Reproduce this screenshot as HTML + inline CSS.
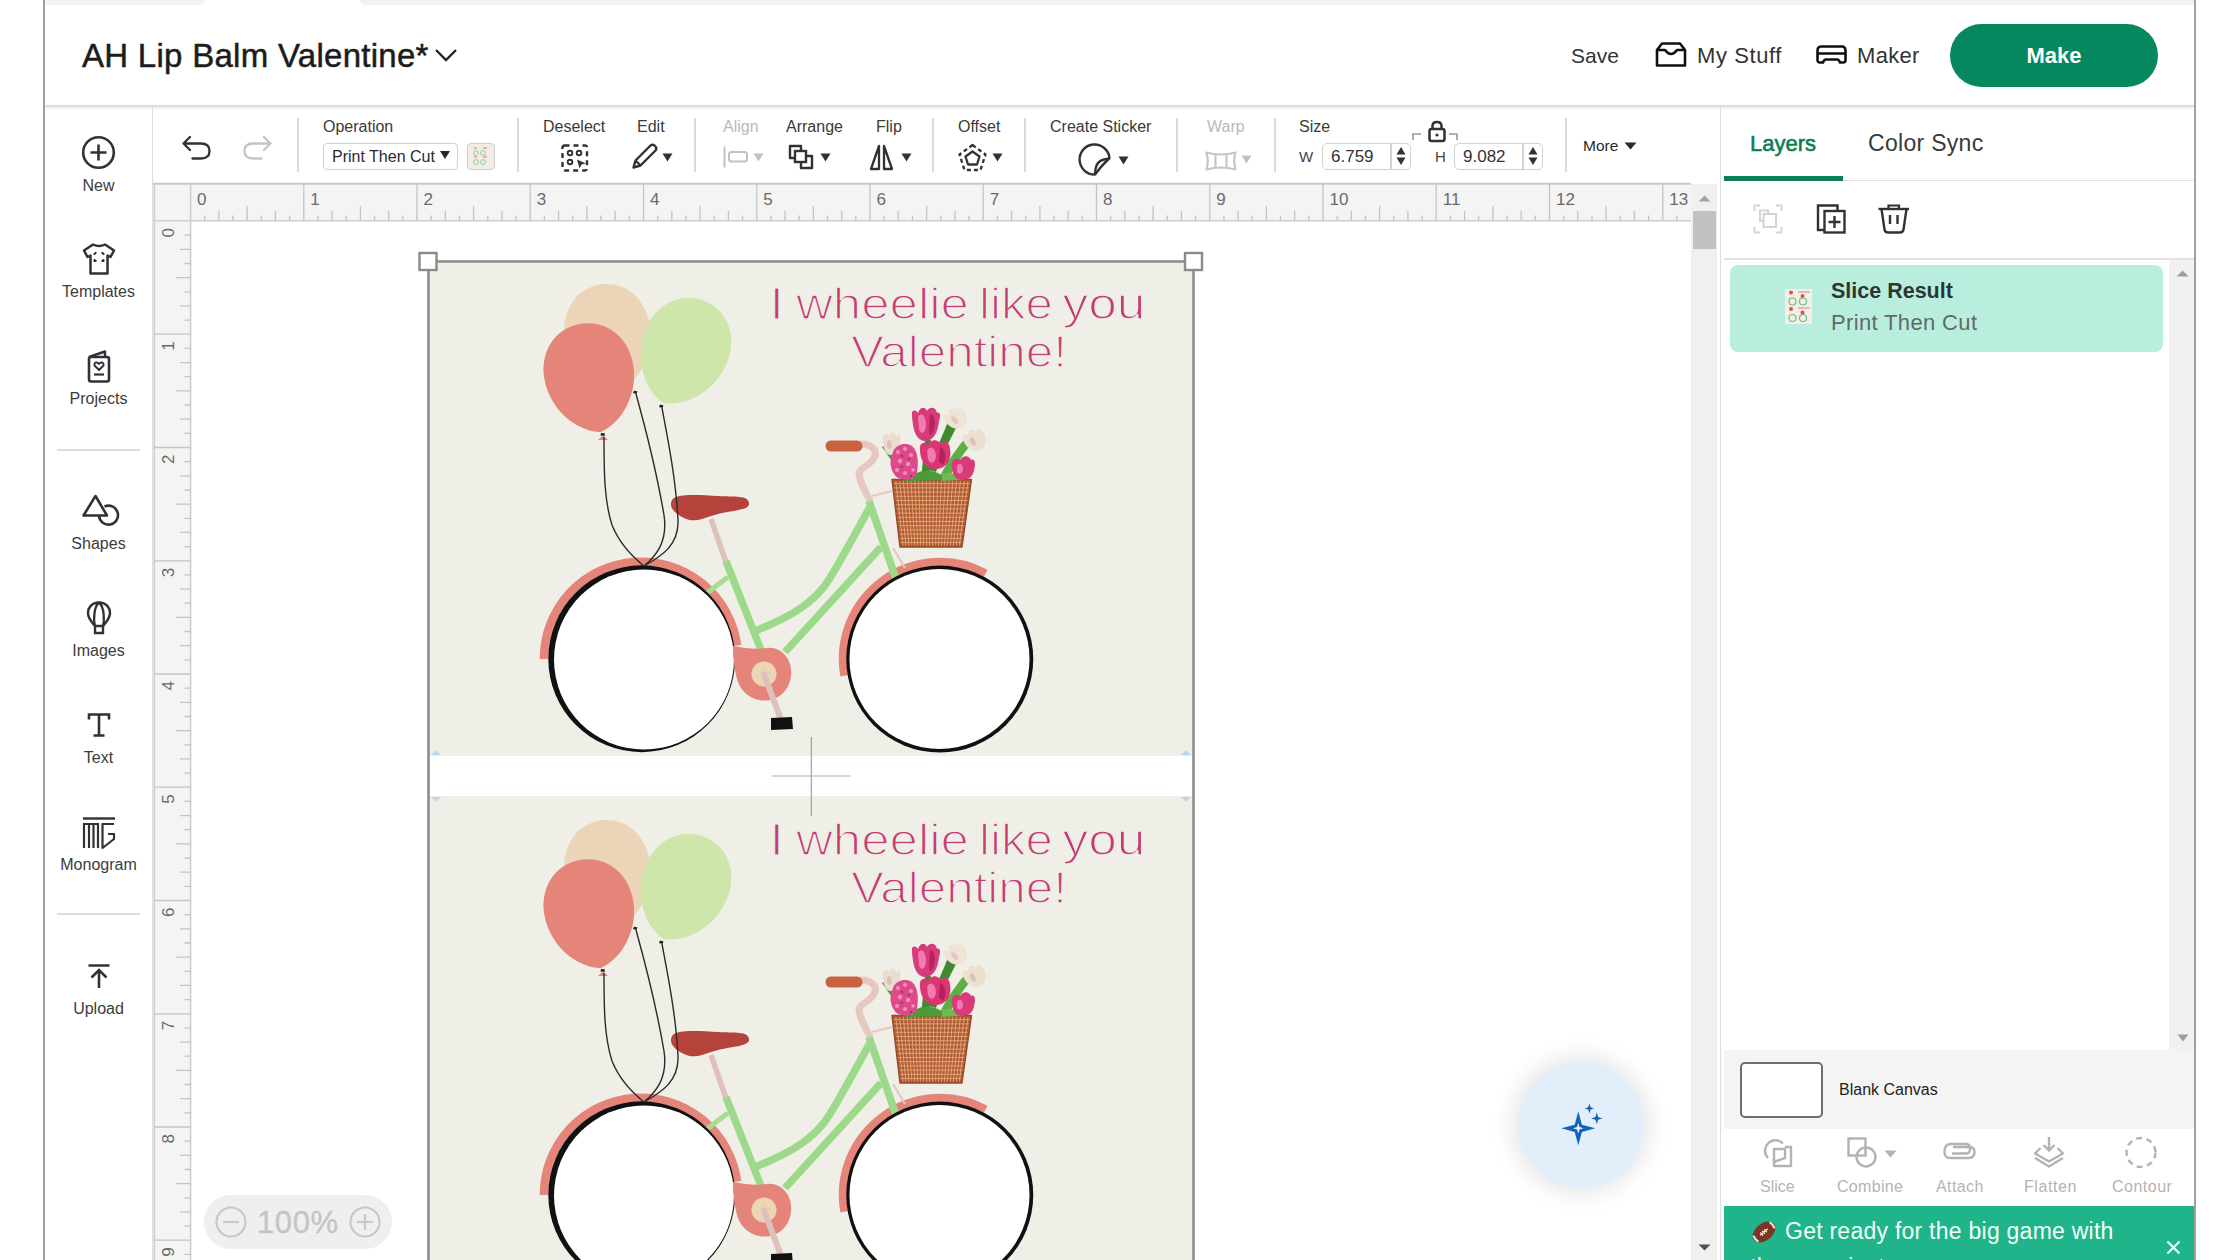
<!DOCTYPE html>
<html><head><meta charset="utf-8">
<style>
*{box-sizing:border-box;margin:0;padding:0}
html,body{width:2240px;height:1260px;overflow:hidden;background:#fff;font-family:"Liberation Sans",sans-serif;color:#2b2b2b}
.a{position:absolute}
.t{position:absolute;white-space:nowrap;line-height:1}
svg{position:absolute;overflow:visible}
.lbl{position:absolute;white-space:nowrap;line-height:1;font-size:16px;color:#3c3c3c;text-align:center}
.tl{position:absolute;white-space:nowrap;line-height:1;font-size:16px;color:#3a3a3a}
.dis{color:#b9b9b9}
.sep{position:absolute;width:2px;background:#dadada;top:118px;height:54px}
</style></head><body>

<!-- frame -->
<div class="a" style="left:43px;top:0;width:2px;height:1260px;background:#a0a0a0"></div>
<div class="a" style="left:2194px;top:0;width:2px;height:1260px;background:#a0a0a0"></div>
<div class="a" style="left:45px;top:0;width:160px;height:5px;background:#f1f1f1;border-radius:0 0 6px 0"></div>
<div class="a" style="left:360px;top:0;width:1834px;height:5px;background:#f1f1f1;border-radius:0 0 0 6px"></div>
<div class="t" style="left:82px;top:39px;font-size:33px;letter-spacing:0.28px;color:#1c1c1c;-webkit-text-stroke:0.5px #1c1c1c">AH Lip Balm Valentine*</div>
<svg style="left:433px;top:47px" width="26" height="16" viewBox="0 0 26 16"><path d="M3 3 L13 13 L23 3" fill="none" stroke="#222" stroke-width="2.4"/></svg>
<div class="t" style="left:1571px;top:45px;font-size:21px;color:#333">Save</div>
<svg style="left:1655px;top:42px" width="32" height="25" viewBox="0 0 32 25"><path d="M2 8 L7 1.5 H25 L30 8 V23.5 H2 Z M2 8 H10 Q16 16 22 8 H30" fill="none" stroke="#111" stroke-width="2.6" stroke-linejoin="round"/></svg>
<div class="t" style="left:1697px;top:45px;font-size:22px;letter-spacing:0.6px;color:#333">My Stuff</div>
<svg style="left:1816px;top:45px" width="31" height="19" viewBox="0 0 31 19"><path d="M5 1.5 H26 Q29.5 1.5 29.5 6 V15 Q29.5 17.5 27 17.5 H24 Q23 14.5 21 14.5 H10 Q8 14.5 7 17.5 H4 Q1.5 17.5 1.5 15 V6 Q1.5 1.5 5 1.5 Z M1.5 8.5 H29.5" fill="none" stroke="#111" stroke-width="2.6" stroke-linejoin="round"/></svg>
<div class="t" style="left:1857px;top:45px;font-size:22px;letter-spacing:0.3px;color:#333">Maker</div>
<div class="a" style="left:1950px;top:24px;width:208px;height:63px;border-radius:32px;background:#05875f"></div>
<div class="t" style="left:1950px;top:45px;width:208px;text-align:center;font-size:22px;font-weight:bold;color:#fff">Make</div>
<div class="a" style="left:45px;top:105px;width:2149px;height:2px;background:#dcdcdc;box-shadow:0 1px 3px rgba(0,0,0,0.12)"></div>

<div class="a" style="left:152px;top:107px;width:1px;height:1153px;background:#dedede"></div>
<svg style="left:80px;top:134px" width="37" height="37" viewBox="0 0 37 37"><circle cx="18.5" cy="18.5" r="15.3" fill="none" stroke="#2f3236" stroke-width="2.6"/><path d="M18.5 10.5V26.5M10.5 18.5H26.5" stroke="#2f3236" stroke-width="2.6"/></svg>
<div class="lbl" style="left:45px;width:107px;top:177.5px">New</div>
<svg style="left:82px;top:242px" width="34" height="34" viewBox="0 0 34 34"><path d="M11 2.5 Q17 5.5 23 2.5 L32 8.5 L28.5 15 L25.5 13.5 V31.5 H8.5 V13.5 L5.5 15 L2 8.5 Z" fill="none" stroke="#2f3236" stroke-width="2.5" stroke-linejoin="round"/><path d="M12.5 11h2M19.5 11h2M12.5 11v2M21.5 11v2M12.5 17v2h2M21.5 17v2h-2" stroke="#2f3236" stroke-width="1.8" fill="none"/></svg>
<div class="lbl" style="left:45px;width:107px;top:284px">Templates</div>
<svg style="left:86px;top:349px" width="26" height="35" viewBox="0 0 26 35"><path d="M3 8 L19 2.5 V8" fill="none" stroke="#2f3236" stroke-width="2.4" stroke-linejoin="round"/><rect x="3" y="8" width="20" height="24.5" rx="2" fill="none" stroke="#2f3236" stroke-width="2.6"/><path d="M13 21 L8.5 16.5 Q8 13.5 10.5 13.5 Q12 13.5 13 15 Q14 13.5 15.5 13.5 Q18 13.5 17.5 16.5 Z" fill="none" stroke="#2f3236" stroke-width="1.9" stroke-linejoin="round"/><path d="M8 25.5H18" stroke="#2f3236" stroke-width="2.2"/></svg>
<div class="lbl" style="left:45px;width:107px;top:391px">Projects</div>
<div class="a" style="left:57px;top:449px;width:83px;height:2px;background:#dcdcdc"></div>
<svg style="left:80px;top:492px" width="38" height="38" viewBox="0 0 38 38"><path d="M15.5 4 L3.5 23.5 H27 Z" fill="none" stroke="#2f3236" stroke-width="2.6" stroke-linejoin="round"/><path d="M19 23.5 A9.5 9.5 0 1 0 24.5 14.5" fill="none" stroke="#2f3236" stroke-width="2.6"/></svg>
<div class="lbl" style="left:45px;width:107px;top:536px">Shapes</div>
<svg style="left:86px;top:600px" width="26" height="36" viewBox="0 0 26 36"><path d="M13 2.5 C5.5 2.5 2 8 2 13 C2 18.5 6 22.5 9 26 H17 C20 22.5 24 18.5 24 13 C24 8 20.5 2.5 13 2.5 Z" fill="none" stroke="#2f3236" stroke-width="2.5" stroke-linejoin="round"/><path d="M13 2.5 C7.5 7 7.5 21 9 26 M13 2.5 C18.5 7 18.5 21 17 26" fill="none" stroke="#2f3236" stroke-width="2.3"/><path d="M9 26 V33 H17 V26" fill="none" stroke="#2f3236" stroke-width="2.4"/></svg>
<div class="lbl" style="left:45px;width:107px;top:643px">Images</div>
<svg style="left:86px;top:711px" width="26" height="28" viewBox="0 0 26 28"><path d="M3 8.5 V3.5 H23 V8.5 M13 3.5 V24.5 M7.5 24.5 H18.5" fill="none" stroke="#2f3236" stroke-width="2.6"/></svg>
<div class="lbl" style="left:45px;width:107px;top:750px">Text</div>
<svg style="left:81px;top:815px" width="36" height="36" viewBox="0 0 36 36"><path d="M2 3.5 H34" stroke="#2f3236" stroke-width="2.4"/><path d="M3 33 V9 H17 V33 M8 9 V33 M12.5 9 V33" fill="none" stroke="#2f3236" stroke-width="2.2"/><path d="M33 9 H21.5 V33 L33 24 V19 H27" fill="none" stroke="#2f3236" stroke-width="2.2" stroke-linejoin="round"/></svg>
<div class="lbl" style="left:45px;width:107px;top:857px">Monogram</div>
<div class="a" style="left:57px;top:913px;width:83px;height:2px;background:#dcdcdc"></div>
<svg style="left:86px;top:962px" width="26" height="28" viewBox="0 0 26 28"><path d="M2.5 3.5 H23.5 M13 26 V8.5 M5.5 15.5 L13 8 L20.5 15.5" fill="none" stroke="#2f3236" stroke-width="2.6"/></svg>
<div class="lbl" style="left:45px;width:107px;top:1001px">Upload</div>

<svg style="left:180px;top:134px" width="34" height="28" viewBox="0 0 34 28"><path d="M10 3 L3.5 9.5 L10 16 M3.5 9.5 H21 Q29.5 9.5 29.5 17 Q29.5 24.5 21 24.5 H12.5" fill="none" stroke="#2f3236" stroke-width="2.3" stroke-linecap="round" stroke-linejoin="round"/></svg>
<svg style="left:240px;top:134px" width="34" height="28" viewBox="0 0 34 28"><path d="M24 3 L30.5 9.5 L24 16 M30.5 9.5 H13 Q4.5 9.5 4.5 17 Q4.5 24.5 13 24.5 H21.5" fill="none" stroke="#c4c4c4" stroke-width="2.3" stroke-linecap="round" stroke-linejoin="round"/></svg>
<div class="sep" style="left:297px"></div>
<div class="tl" style="left:323px;top:119px">Operation</div>
<div class="a" style="left:323px;top:143px;width:135px;height:27px;border:1.5px solid #cfcfcf;border-radius:4px"></div>
<div class="tl" style="left:332px;top:149px;color:#2a2a2a">Print Then Cut</div>
<svg style="left:439px;top:150px" width="12" height="10" viewBox="0 0 12 10"><path d="M1 1H11L6 9Z" fill="#2a2a2a"/></svg>
<div class="a" style="left:467px;top:143px;width:28px;height:27px;border:1.5px solid #cfcfcf;border-radius:4px;background:#f1ede5"></div>
<svg style="left:471px;top:146px" width="20" height="21" viewBox="0 0 20 21"><g fill="none" stroke-width="1"><circle cx="5" cy="7" r="2.4" stroke="#8fcf9f"/><circle cx="12" cy="7" r="2.4" stroke="#8fcf9f"/><circle cx="5" cy="16" r="2.4" stroke="#8fcf9f"/><circle cx="12" cy="16" r="2.4" stroke="#8fcf9f"/></g><path d="M3 2h3M12 2h4M3 11h3M12 11h4" stroke="#d77" stroke-width="1.2"/></svg>
<div class="sep" style="left:517px"></div>
<div class="tl" style="left:543px;top:119px">Deselect</div>
<svg style="left:560px;top:143px" width="30" height="30" viewBox="0 0 30 30"><rect x="2.5" y="2.5" width="24.5" height="25" rx="2" fill="none" stroke="#2f3236" stroke-width="2.4" stroke-dasharray="5 4"/><circle cx="10" cy="10" r="2.3" fill="none" stroke="#2f3236" stroke-width="1.9"/><circle cx="19" cy="10" r="2.3" fill="none" stroke="#2f3236" stroke-width="1.9"/><circle cx="10" cy="19" r="2.3" fill="none" stroke="#2f3236" stroke-width="1.9"/><path d="M17 16.5 L26 20.5 L21.5 21.5 L19.5 25.5 Z" fill="#2f3236"/></svg>
<div class="tl" style="left:637px;top:119px">Edit</div>
<svg style="left:630px;top:142px" width="30" height="30" viewBox="0 0 30 30"><path d="M3.5 25.5 L5.5 18.5 L20.5 3.5 Q22.5 1.8 24.5 3.5 L25.5 4.5 Q27.2 6.5 25.5 8.5 L10.5 23.5 Z M5.5 18.5 L10.5 23.5" fill="none" stroke="#2f3236" stroke-width="2.4" stroke-linejoin="round"/></svg>
<svg style="left:662px;top:153px" width="11" height="9" viewBox="0 0 11 9"><path d="M0.5 0.5H10.5L5.5 8.5Z" fill="#2f3236"/></svg>
<div class="sep" style="left:694px"></div>
<div class="tl dis" style="left:723px;top:119px">Align</div>
<svg style="left:722px;top:145px" width="28" height="24" viewBox="0 0 28 24"><path d="M2.5 1.5V22.5" stroke="#c2c2c2" stroke-width="2"/><rect x="7" y="7" width="18" height="9.5" rx="2.5" fill="none" stroke="#c2c2c2" stroke-width="2"/></svg>
<svg style="left:753px;top:153px" width="11" height="9" viewBox="0 0 11 9"><path d="M0.5 0.5H10.5L5.5 8.5Z" fill="#c2c2c2"/></svg>
<div class="tl" style="left:786px;top:119px">Arrange</div>
<svg style="left:787px;top:143px" width="30" height="28" viewBox="0 0 30 28"><path d="M14 8 V3 H3 V15 H8" fill="none" stroke="#2f3236" stroke-width="2.4" stroke-linejoin="round"/><rect x="8" y="8" width="11" height="11" fill="none" stroke="#2f3236" stroke-width="2.4"/><path d="M19 13 H25 V25 H14 V19" fill="none" stroke="#2f3236" stroke-width="2.4" stroke-linejoin="round"/></svg>
<svg style="left:820px;top:153px" width="11" height="9" viewBox="0 0 11 9"><path d="M0.5 0.5H10.5L5.5 8.5Z" fill="#2f3236"/></svg>
<div class="tl" style="left:876px;top:119px">Flip</div>
<svg style="left:868px;top:143px" width="28" height="28" viewBox="0 0 28 28"><path d="M11 3 L3 26 H11 Z M16 3 L24 26 H16 Z" fill="none" stroke="#2f3236" stroke-width="2.3" stroke-linejoin="round"/></svg>
<svg style="left:901px;top:153px" width="11" height="9" viewBox="0 0 11 9"><path d="M0.5 0.5H10.5L5.5 8.5Z" fill="#2f3236"/></svg>
<div class="sep" style="left:932px"></div>
<div class="tl" style="left:958px;top:119px">Offset</div>
<svg style="left:958px;top:143px" width="30" height="30" viewBox="0 0 30 30"><path d="M14.5 2 L27.5 11.5 L22.5 27 H6.5 L1.5 11.5 Z" fill="none" stroke="#2f3236" stroke-width="2.3" stroke-dasharray="4 3" stroke-linejoin="round"/><path d="M14.5 8.5 L21.5 13.5 L19 21.5 H10 L7.5 13.5 Z" fill="none" stroke="#2f3236" stroke-width="2.3" stroke-linejoin="round"/></svg>
<svg style="left:992px;top:153px" width="11" height="9" viewBox="0 0 11 9"><path d="M0.5 0.5H10.5L5.5 8.5Z" fill="#2f3236"/></svg>
<div class="sep" style="left:1024px"></div>
<div class="tl" style="left:1050px;top:119px">Create Sticker</div>
<svg style="left:1078px;top:143px" width="36" height="35" viewBox="0 0 36 35"><path d="M17 31.5 A15 15 0 1 1 31.5 15 Q30 16 26 16.5 Q19 18 17.5 26 Z" fill="none" stroke="#2f3236" stroke-width="2.4" stroke-linejoin="round"/><path d="M31.5 15 Q24 22 17 31.5" fill="none" stroke="#2f3236" stroke-width="2.4"/></svg>
<svg style="left:1118px;top:156px" width="11" height="9" viewBox="0 0 11 9"><path d="M0.5 0.5H10.5L5.5 8.5Z" fill="#2f3236"/></svg>
<div class="sep" style="left:1176px"></div>
<div class="tl dis" style="left:1207px;top:119px">Warp</div>
<svg style="left:1204px;top:150px" width="34" height="22" viewBox="0 0 34 22"><path d="M2.5 2.5 Q17 6.5 31.5 2.5 Q29 11 31.5 19.5 Q17 15.5 2.5 19.5 Q5 11 2.5 2.5 Z M11.5 5 V17 M22.5 5 V17" fill="none" stroke="#c6c6c6" stroke-width="2.2" stroke-linejoin="round"/></svg>
<svg style="left:1241px;top:155px" width="11" height="9" viewBox="0 0 11 9"><path d="M0.5 0.5H10.5L5.5 8.5Z" fill="#c2c2c2"/></svg>
<div class="sep" style="left:1274px"></div>
<div class="tl" style="left:1299px;top:119px">Size</div>
<div class="tl" style="left:1299px;top:149px;font-size:15px;color:#444">W</div>
<div class="a" style="left:1322px;top:143px;width:89px;height:27px;border:1.5px solid #d2d2d2;border-radius:5px"></div>
<div class="a" style="left:1390px;top:144px;width:1.5px;height:25px;background:#d2d2d2"></div>
<div class="tl" style="left:1331px;top:148px;font-size:17px;color:#333">6.759</div>
<svg style="left:1395px;top:146px" width="12" height="20" viewBox="0 0 12 20"><path d="M1.5 8.5H10.5L6 1Z M1.5 11.5H10.5L6 19Z" fill="#2f3236"/></svg>
<svg style="left:1411px;top:119px" width="48" height="24" viewBox="0 0 48 24"><path d="M2 21 V15 H10 M38 15 H46 V21" fill="none" stroke="#9a9a9a" stroke-width="1.6"/><rect x="18.5" y="10" width="15" height="12" rx="2" fill="none" stroke="#2f3236" stroke-width="2.5"/><path d="M21.5 10 V7 Q21.5 3 26 3 Q30.5 3 30.5 7 V10" fill="none" stroke="#2f3236" stroke-width="2.5"/><circle cx="26" cy="16" r="1.6" fill="#2f3236"/></svg>
<div class="tl" style="left:1435px;top:149px;font-size:15px;color:#444">H</div>
<div class="a" style="left:1454px;top:143px;width:89px;height:27px;border:1.5px solid #d2d2d2;border-radius:5px"></div>
<div class="a" style="left:1522px;top:144px;width:1.5px;height:25px;background:#d2d2d2"></div>
<div class="tl" style="left:1463px;top:148px;font-size:17px;color:#333">9.082</div>
<svg style="left:1527px;top:146px" width="12" height="20" viewBox="0 0 12 20"><path d="M1.5 8.5H10.5L6 1Z M1.5 11.5H10.5L6 19Z" fill="#2f3236"/></svg>
<div class="sep" style="left:1565px"></div>
<div class="tl" style="left:1583px;top:138px;font-size:15.5px;color:#2a2a2a">More</div>
<svg style="left:1624px;top:142px" width="13" height="8" viewBox="0 0 13 8"><path d="M0.5 0.5H12.5L6.5 7.5Z" fill="#2a2a2a"/></svg>

<div class="a" style="left:153px;top:183px;width:1538px;height:38px;background:#f4f4f4"></div>
<div class="a" style="left:153px;top:221px;width:38px;height:1039px;background:#f4f4f4"></div>
<svg style="left:0;top:0" width="2240" height="1260" viewBox="0 0 2240 1260">
<g stroke="#c4c4c4" stroke-width="1.3" fill="none">
<path d="M153 183.8H1691" stroke="#c8c8c8" stroke-width="2"/>
<path d="M153 220.7H1691" stroke="#cfcfcf" stroke-width="1.6"/>
<path d="M190.6 184V1260" stroke="#cfcfcf" stroke-width="1.6"/>
<path d="M154.4 184V1260" stroke="#cfcfcf" stroke-width="1.6"/>
<path d="M204.7 215.5V221M218.8 211V221M233.0 215.5V221M247.1 206V221M261.3 215.5V221M275.4 211V221M289.6 215.5V221M303.8 184V221M317.9 215.5V221M332.1 211V221M346.2 215.5V221M360.4 206V221M374.5 215.5V221M388.7 211V221M402.8 215.5V221M417.0 184V221M431.2 215.5V221M445.3 211V221M459.5 215.5V221M473.6 206V221M487.8 215.5V221M501.9 211V221M516.1 215.5V221M530.2 184V221M544.4 215.5V221M558.6 211V221M572.7 215.5V221M586.9 206V221M601.0 215.5V221M615.2 211V221M629.3 215.5V221M643.5 184V221M657.7 215.5V221M671.8 211V221M686.0 215.5V221M700.1 206V221M714.3 215.5V221M728.4 211V221M742.6 215.5V221M756.8 184V221M770.9 215.5V221M785.1 211V221M799.2 215.5V221M813.4 206V221M827.5 215.5V221M841.7 211V221M855.8 215.5V221M870.0 184V221M884.2 215.5V221M898.3 211V221M912.5 215.5V221M926.6 206V221M940.8 215.5V221M954.9 211V221M969.1 215.5V221M983.2 184V221M997.4 215.5V221M1011.6 211V221M1025.7 215.5V221M1039.9 206V221M1054.0 215.5V221M1068.2 211V221M1082.3 215.5V221M1096.5 184V221M1110.7 215.5V221M1124.8 211V221M1139.0 215.5V221M1153.1 206V221M1167.3 215.5V221M1181.4 211V221M1195.6 215.5V221M1209.8 184V221M1223.9 215.5V221M1238.1 211V221M1252.2 215.5V221M1266.4 206V221M1280.5 215.5V221M1294.7 211V221M1308.8 215.5V221M1323.0 184V221M1337.2 215.5V221M1351.3 211V221M1365.5 215.5V221M1379.6 206V221M1393.8 215.5V221M1407.9 211V221M1422.1 215.5V221M1436.2 184V221M1450.4 215.5V221M1464.6 211V221M1478.7 215.5V221M1492.9 206V221M1507.0 215.5V221M1521.2 211V221M1535.3 215.5V221M1549.5 184V221M1563.7 215.5V221M1577.8 211V221M1592.0 215.5V221M1606.1 206V221M1620.3 215.5V221M1634.4 211V221M1648.6 215.5V221M1662.8 184V221M1676.9 215.5V221M184.5 235.2H190.6M180 249.3H190.6M184.5 263.5H190.6M176 277.6H190.6M184.5 291.8H190.6M180 305.9H190.6M184.5 320.1H190.6M154 334.2H190.6M184.5 348.4H190.6M180 362.6H190.6M184.5 376.7H190.6M176 390.9H190.6M184.5 405.0H190.6M180 419.2H190.6M184.5 433.3H190.6M154 447.5H190.6M184.5 461.7H190.6M180 475.8H190.6M184.5 490.0H190.6M176 504.1H190.6M184.5 518.3H190.6M180 532.4H190.6M184.5 546.6H190.6M154 560.8H190.6M184.5 574.9H190.6M180 589.1H190.6M184.5 603.2H190.6M176 617.4H190.6M184.5 631.5H190.6M180 645.7H190.6M184.5 659.8H190.6M154 674.0H190.6M184.5 688.2H190.6M180 702.3H190.6M184.5 716.5H190.6M176 730.6H190.6M184.5 744.8H190.6M180 758.9H190.6M184.5 773.1H190.6M154 787.2H190.6M184.5 801.4H190.6M180 815.6H190.6M184.5 829.7H190.6M176 843.9H190.6M184.5 858.0H190.6M180 872.2H190.6M184.5 886.3H190.6M154 900.5H190.6M184.5 914.7H190.6M180 928.8H190.6M184.5 943.0H190.6M176 957.1H190.6M184.5 971.3H190.6M180 985.4H190.6M184.5 999.6H190.6M154 1013.8H190.6M184.5 1027.9H190.6M180 1042.1H190.6M184.5 1056.2H190.6M176 1070.4H190.6M184.5 1084.5H190.6M180 1098.7H190.6M184.5 1112.8H190.6M154 1127.0H190.6M184.5 1141.2H190.6M180 1155.3H190.6M184.5 1169.5H190.6M176 1183.6H190.6M184.5 1197.8H190.6M180 1211.9H190.6M184.5 1226.1H190.6M154 1240.2H190.6M184.5 1254.4H190.6"/>
</g>
<g fill="#6a6a6a" font-family="Liberation Sans" font-size="17">
<text x="197.0" y="205">0</text>
<text x="310.2" y="205">1</text>
<text x="423.5" y="205">2</text>
<text x="536.8" y="205">3</text>
<text x="650.0" y="205">4</text>
<text x="763.2" y="205">5</text>
<text x="876.5" y="205">6</text>
<text x="989.8" y="205">7</text>
<text x="1103.0" y="205">8</text>
<text x="1216.2" y="205">9</text>
<text x="1329.5" y="205">10</text>
<text x="1442.8" y="205">11</text>
<text x="1556.0" y="205">12</text>
<text x="1669.2" y="205">13</text>
<text transform="translate(173.5 228.0) rotate(-90)" text-anchor="end">0</text>
<text transform="translate(173.5 341.2) rotate(-90)" text-anchor="end">1</text>
<text transform="translate(173.5 454.5) rotate(-90)" text-anchor="end">2</text>
<text transform="translate(173.5 567.8) rotate(-90)" text-anchor="end">3</text>
<text transform="translate(173.5 681.0) rotate(-90)" text-anchor="end">4</text>
<text transform="translate(173.5 794.2) rotate(-90)" text-anchor="end">5</text>
<text transform="translate(173.5 907.5) rotate(-90)" text-anchor="end">6</text>
<text transform="translate(173.5 1020.8) rotate(-90)" text-anchor="end">7</text>
<text transform="translate(173.5 1134.0) rotate(-90)" text-anchor="end">8</text>
<text transform="translate(173.5 1247.2) rotate(-90)" text-anchor="end">9</text>
</g></svg>
<div class="a" style="left:1691px;top:184px;width:26px;height:1076px;background:#f0f0f0"></div>
<div class="a" style="left:1693px;top:211px;width:23px;height:38px;background:#c1c1c1"></div>
<svg style="left:1698px;top:195px" width="13" height="7" viewBox="0 0 13 7"><path d="M0.5 6.5H12.5L6.5 0.5Z" fill="#a3a3a3"/></svg>
<svg style="left:1698px;top:1244px" width="13" height="7" viewBox="0 0 13 7"><path d="M0.5 0.5H12.5L6.5 6.5Z" fill="#505050"/></svg>
<svg style="left:0;top:0" width="2240" height="1260" viewBox="0 0 2240 1260">
<defs><g id="art"><path transform="translate(608 339) rotate(-6)" d="M0 -55.0 C24.9 -55.0 43.0 -34.1 43.0 -6.6 C43.0 24.8 21.5 50.6 0 55.0 C-21.5 50.6 -43.0 24.8 -43.0 -6.6 C-43.0 -34.1 -24.9 -55.0 0 -55.0Z" fill="#ebd4b7"/>
<path transform="translate(684 352) rotate(22)" d="M0 -55.0 C25.5 -55.0 44.0 -34.1 44.0 -6.6 C44.0 24.8 22.0 50.6 0 55.0 C-22.0 50.6 -44.0 24.8 -44.0 -6.6 C-44.0 -34.1 -25.5 -55.0 0 -55.0Z" fill="#cfe6ab"/>
<path transform="translate(590 378) rotate(-11)" d="M0 -55.0 C26.1 -55.0 45.0 -34.1 45.0 -6.6 C45.0 24.8 22.5 50.6 0 55.0 C-22.5 50.6 -45.0 24.8 -45.0 -6.6 C-45.0 -34.1 -26.1 -55.0 0 -55.0Z" fill="#e5857a"/>
<path d="M634 390.5l3.5 1-1 2.5-3.5-1z M660 404.5l3.5 1-1 2.5-3.5-1z M601 433l4 0.5-0.5 2.5-4-0.5z" fill="#222"/>
<path d="M598 440 L603 435.5 L608 440 Z" fill="#e58a80"/>
<path d="M544.0 659.0 A97 97 0 0 1 737.1 645.5" fill="none" stroke="#e5857a" stroke-width="8.5"/>
<path d="M844.5 675.8 A97 97 0 0 1 985.5 573.4" fill="none" stroke="#e5857a" stroke-width="8.5"/>
<path d="M711 519 L726 562" stroke="#dfc1bb" stroke-width="5.5"/>
<path d="M672 500 C676 493 700 495 718 496 C735 497 748 495 749 503 C750 510 735 510 718 514 C705 517 695 524 684 518 C676 514 668 508 672 500Z" fill="#b5433c"/>
<g fill="none" stroke="#9dd98a" stroke-width="7.5" stroke-linecap="butt" stroke-linejoin="round"><path d="M726 561 L761 650"/><path d="M755 631 C790 617 815 603 830 578 C845 553 860 525 871 505"/><path d="M785 652 L881 547"/><path d="M869 501 L897 582"/></g>
<path d="M707 593 L728 577" stroke="#a7dc93" stroke-width="5"/>
<path d="M860 444 C872 444 878 450 874 458 C870 466 858 468 859 475 C861 485 866 492 870 501" fill="none" stroke="#e6c8c1" stroke-width="7" stroke-linejoin="round"/>
<rect x="825.5" y="440.5" width="37" height="11" rx="5.5" fill="#c9623e"/>
<path d="M872 496 L892 491 M893 548 L905 568" stroke="#e6c8c1" stroke-width="2.2"/>
<circle cx="641.7" cy="658.75" r="93.4" fill="#111"/>
<circle cx="644" cy="659.5" r="90" fill="#fff"/>
<circle cx="939.75" cy="659.1" r="93.5" fill="#111"/>
<circle cx="939.5" cy="658.9" r="90" fill="#fff"/>
<path d="M733 646 C745 648 756 650 766 648 C782 646 793 660 791 676 C789 694 773 703 759 700 C748 698 741 690 738 682 C734 670 733 656 733 646Z" fill="#e5857a"/>
<circle cx="764" cy="674" r="12.5" fill="#ecd5b4"/>
<path d="M764 674 L781 720" stroke="#dfc1bb" stroke-width="6" stroke-linecap="round"/>
<path d="M771 718 L792 717 L793 729 L771 730Z" fill="#111"/>
<g fill="none" stroke="#2a2a2a" stroke-width="1.4"><path d="M604 437 C604 470 604 500 612 525 C620 545 634 558 644 566"/><path d="M636 394 C646 430 658 480 664 515 C668 542 656 556 644 566"/><path d="M662 408 C668 440 676 480 678 520 C679 545 662 556 644 566"/></g>
<g>
<path d="M892 479.5 L971.5 479.5 L962 547 L900 547 Z" fill="#ab5a34" stroke="#9a4a26" stroke-width="1.4" stroke-linejoin="round"/>
<path d="M895.8 481L903.0 545.5M899.6 481L905.9 545.5M903.4 481L908.9 545.5M907.2 481L911.9 545.5M911.0 481L914.8 545.5M914.8 481L917.8 545.5M918.6 481L920.7 545.5M922.4 481L923.7 545.5M926.2 481L926.7 545.5M930.0 481L929.6 545.5M933.8 481L932.6 545.5M937.6 481L935.6 545.5M941.4 481L938.5 545.5M945.2 481L941.5 545.5M949.0 481L944.5 545.5M952.8 481L947.4 545.5M956.6 481L950.4 545.5M960.4 481L953.3 545.5M964.2 481L956.3 545.5M968.0 481L959.3 545.5M893.7 483.7H969.7M894.2 487.9H969.1M894.7 492.1H968.5M895.2 496.3H967.9M895.7 500.5H967.3M896.2 504.7H966.8M896.7 508.9H966.2M897.2 513.1H965.6M897.7 517.3H965.0M898.2 521.5H964.4M898.7 525.7H963.8M899.2 529.9H963.2M899.7 534.1H962.6M900.2 538.3H962.0M900.7 542.5H961.4" stroke="#eeac7a" stroke-width="0.9" opacity="0.95"/>
</g>
<g>
<path d="M882 447 C890 458 898 470 905 481 L914 481 C906 468 896 455 888 444Z" fill="#4a9636"/>
<path d="M947 424 C942 438 934 452 928 470 L936 472 C942 455 950 440 956 428Z" fill="#3f8a2e"/>
<path d="M966 437 C958 447 948 460 940 476 L949 478 C956 464 965 452 972 443Z" fill="#5cae45"/>
<path d="M925 438 L921 480 L929 480 L931 440Z" fill="#3d8c2c"/>
<path d="M914 474 C925 468 938 470 948 480 L912 481Z" fill="#4c9a38"/>
<path d="M942 474 C950 471 956 474 960 480 L942 481Z" fill="#6dbb4f"/>
<path d="M883 440 C882 434 886 432 889 436 C890 431 895 431 896 436 C899 433 902 436 900 442 C900 450 896 455 891 455 C886 455 883 449 883 440Z" fill="#ecdccf"/>
<path d="M887 442 C888 438 891 440 892 446 C891 450 888 450 887 446Z" fill="#d9c2b4"/>
<g transform="rotate(-35 957 419)"><path d="M946 414 C946 408 950 407 953 411 C955 406 960 406 961 411 C964 408 968 410 968 415 C968 424 963 429 957 429 C951 429 946 423 946 414Z" fill="#efe3d6"/><path d="M952 416 C954 412 957 414 957 420 C956 424 953 424 952 420Z" fill="#dccbbd"/></g>
<g transform="rotate(-25 975 440)"><path d="M964 436 C964 430 968 429 971 433 C973 428 978 428 979 433 C982 430 986 432 986 437 C986 446 981 451 975 451 C969 451 964 445 964 436Z" fill="#ecdfd0"/><path d="M970 438 C972 434 975 436 975 442 C974 446 971 446 970 442Z" fill="#d8c6b5"/></g>
<path d="M912 416 C911 410 915 409 918 413 C920 407 925 406 927 411 C930 406 936 407 937 413 C940 411 941 416 939 421 C938 433 933 441 925 441 C917 441 913 432 912 416Z" fill="#d83a7b"/>
<path d="M918 417 C921 412 925 414 926 424 C926 433 921 436 919 429Z" fill="#f07cb0"/>
<path d="M930 414 C934 415 936 420 934 430 C932 436 929 437 929 430Z" fill="#b9245f"/>
<path d="M893 452 C896 444 906 442 912 446 C919 452 919 466 916 476 C911 481 898 481 894 474 C889 466 890 459 893 452Z" fill="#dd4a8c"/>
<g fill="#f391bf"><circle cx="898" cy="452" r="2"/><circle cx="905" cy="449" r="2"/><circle cx="911" cy="455" r="2"/><circle cx="900" cy="461" r="2.2"/><circle cx="908" cy="464" r="2.2"/><circle cx="897" cy="470" r="2"/><circle cx="905" cy="473" r="2"/><circle cx="913" cy="470" r="1.8"/></g>
<g fill="#b82a6a"><circle cx="902" cy="456" r="1.3"/><circle cx="909" cy="459" r="1.2"/><circle cx="902" cy="467" r="1.2"/><circle cx="911" cy="476" r="1.2"/></g>
<path d="M920 450 C919 443 924 441 928 445 C931 439 938 439 940 444 C944 440 950 442 950 449 C952 460 946 469 936 469 C926 469 920 461 920 450Z" fill="#dc3576"/>
<path d="M927 451 C930 445 935 447 936 456 C935 464 930 465 928 459Z" fill="#f27caf"/>
<path d="M940 447 C946 450 947 458 943 465 L939 462Z" fill="#b6205b"/>
<path d="M952 466 C951 459 956 457 960 460 C963 455 969 455 971 460 C975 458 976 464 974 470 C973 477 968 480 962 480 C955 480 952 474 952 466Z" fill="#d93b7a"/>
<path d="M957 466 C959 462 963 463 963 470 C962 474 958 475 957 471Z" fill="#f07aae"/>
</g>
<g fill="#c53b72" stroke="#f0efe7" stroke-width="1.5" font-family="Liberation Sans" font-size="45"><text x="770.5" y="318.8" stroke-width="1">I</text><text x="796" y="318.8" textLength="173" lengthAdjust="spacingAndGlyphs">wheelie</text><text x="979" y="318.8" textLength="74" lengthAdjust="spacingAndGlyphs">like</text><text x="1062.5" y="318.8" textLength="83" lengthAdjust="spacingAndGlyphs">you</text><text x="851" y="367" textLength="216" lengthAdjust="spacingAndGlyphs">Valentine!</text></g></g></defs>
<rect x="430" y="263" width="762" height="493" fill="#f0efe7"/>
<rect x="430" y="796" width="762" height="470" fill="#f0efe7"/>
<use href="#art"/>
<use href="#art" transform="translate(0 536)"/>
<path d="M811.3 737V816" stroke="#8c8c8c" stroke-width="1"/><path d="M772 776H851" stroke="#b4b4b4" stroke-width="1.2"/>
<path d="M428.5 262V1260 M428.5 261.5H1193.5 M1193.5 261V1260" stroke="#8b8b8b" stroke-width="2.6" fill="none"/>
<rect x="419.5" y="253" width="17" height="17" fill="#fff" stroke="#8b8b8b" stroke-width="2.4"/>
<rect x="1185" y="253" width="17" height="17" fill="#fff" stroke="#8b8b8b" stroke-width="2.4"/>
<path d="M431 755l5-5 5 5z M431 797l5 5 5-5z M1181 755l5-5 5 5z M1181 797l5 5 5-5z" fill="#bcd6ee"/>
</svg>
<div class="a" style="left:204px;top:1195px;width:188px;height:54px;border-radius:27px;background:#efefef"></div>
<svg style="left:214px;top:1205px" width="34" height="34" viewBox="0 0 34 34"><circle cx="17" cy="17" r="14.5" fill="none" stroke="#c8c8c8" stroke-width="2.2"/><path d="M9 17H25" stroke="#c8c8c8" stroke-width="2.2"/></svg>
<div class="t" style="left:257px;top:1207px;font-size:31px;letter-spacing:0.6px;color:#c4c4c4;-webkit-text-stroke:0.3px #c4c4c4">100%</div>
<svg style="left:348px;top:1205px" width="34" height="34" viewBox="0 0 34 34"><circle cx="17" cy="17" r="14.5" fill="none" stroke="#c8c8c8" stroke-width="2.2"/><path d="M9 17H25M17 9V25" stroke="#c8c8c8" stroke-width="2.2"/></svg>
<div class="a" style="left:1518px;top:1062px;width:126px;height:126px;border-radius:63px;background:#e3eefb;box-shadow:0 0 22px 6px rgba(0,0,0,0.10)"></div>
<svg style="left:0;top:0" width="2240" height="1260" viewBox="0 0 2240 1260"><path d="M1578.3 1111.3 L1581.9 1124.7 L1595.3 1128.3 L1581.9 1131.9 L1578.3 1145.3 L1574.7 1131.9 L1561.3 1128.3 L1574.7 1124.7Z M1589.4 1103.4 L1590.6 1107.2 L1594.2 1108.4 L1590.6 1109.6 L1589.4 1113.4 L1588.2 1109.6 L1584.6 1108.4 L1588.2 1107.2Z M1596.8 1112.6 L1598.1 1117.1 L1602.3 1118.4 L1598.1 1119.7 L1596.8 1124.2 L1595.5 1119.7 L1591.3 1118.4 L1595.5 1117.1Z" fill="#1462b8"/><path d="M1578.3 1123.1 L1579.6 1127.0 L1583.5 1128.3 L1579.6 1129.6 L1578.3 1133.5 L1577.0 1129.6 L1573.1 1128.3 L1577.0 1127.0Z" fill="#e3eefb"/></svg>
<div class="a" style="left:1719.5px;top:107px;width:1.5px;height:1153px;background:#dcdcdc"></div>
<div class="t" style="left:1750px;top:133px;font-size:22px;color:#0b7d58;-webkit-text-stroke:0.6px #0b7d58">Layers</div>
<div class="t" style="left:1868px;top:132px;font-size:23px;letter-spacing:0.3px;color:#3a3a3a">Color Sync</div>
<div class="a" style="left:1724px;top:179.5px;width:470px;height:1.5px;background:#e2e2e2"></div>
<div class="a" style="left:1724px;top:175.5px;width:119px;height:5px;background:#0b7d58"></div>
<svg style="left:1752px;top:203px" width="32" height="32" viewBox="0 0 32 32"><path d="M2.5 8 V2.5 H8 M24 2.5 H29.5 V8 M29.5 24 V29.5 H24 M8 29.5 H2.5 V24" fill="none" stroke="#d4d4d4" stroke-width="2"/><path d="M16 11 V7.5 H8 V18 H11.5" fill="none" stroke="#d4d4d4" stroke-width="2"/><rect x="11.5" y="11" width="12.5" height="13" fill="none" stroke="#d4d4d4" stroke-width="2"/></svg>
<svg style="left:1815px;top:203px" width="32" height="32" viewBox="0 0 32 32"><path d="M9.5 27 H3 V2.5 H22.5 V8" fill="none" stroke="#2f3236" stroke-width="2.4"/><rect x="9.5" y="8" width="20" height="21.5" fill="none" stroke="#2f3236" stroke-width="2.4"/><path d="M19.5 13 V25 M13.5 19 H25.5" stroke="#2f3236" stroke-width="2.4"/></svg>
<svg style="left:1877px;top:203px" width="34" height="32" viewBox="0 0 34 32"><path d="M1.5 6 H32" stroke="#2f3236" stroke-width="2.4"/><path d="M11.5 6 V2.5 H22 V6" fill="none" stroke="#2f3236" stroke-width="2.2"/><path d="M4.5 6 L7.5 26.5 Q8 29.5 11 29.5 H23 Q26 29.5 26.5 26.5 L29.5 6" fill="none" stroke="#2f3236" stroke-width="2.4" stroke-linejoin="round"/><path d="M13 12 V21 M20.5 12 V21" stroke="#2f3236" stroke-width="2.4"/></svg>
<div class="a" style="left:1724px;top:258px;width:470px;height:1.5px;background:#e2e2e2"></div>
<div class="a" style="left:2169px;top:260px;width:25px;height:790px;background:#f1f1f1"></div>
<svg style="left:2176px;top:270px" width="13" height="7" viewBox="0 0 13 7"><path d="M0.5 6.5H12.5L6.5 0.5Z" fill="#9d9d9d"/></svg>
<svg style="left:2177px;top:1034px" width="12" height="8" viewBox="0 0 12 8"><path d="M0.5 0.5H11.5L6 7.5Z" fill="#9d9d9d"/></svg>
<div class="a" style="left:1730px;top:265px;width:433px;height:87px;border-radius:8px;background:#b9eedf"></div>
<svg style="left:1785px;top:289px" width="27" height="35" viewBox="0 0 27 35"><rect x="0" y="0" width="27" height="35" fill="#f3efe6"/><g fill="none" stroke="#6cbf86" stroke-width="1.2"><circle cx="7.5" cy="12.5" r="3.5"/><circle cx="18" cy="12.5" r="3.5"/><circle cx="7.5" cy="29" r="3.5"/><circle cx="18" cy="29" r="3.5"/></g><g fill="#d9544e"><circle cx="6" cy="3.5" r="2"/><circle cx="17.5" cy="7" r="2"/><circle cx="6" cy="20" r="2"/><circle cx="17.5" cy="23.5" r="2"/></g><path d="M13 3h12M13 19h12" stroke="#e07aa0" stroke-width="1"/></svg>
<div class="t" style="left:1831px;top:281px;font-size:21.5px;font-weight:bold;color:#2b3733">Slice Result</div>
<div class="t" style="left:1831px;top:312px;font-size:22px;letter-spacing:0.35px;color:#5f6b67">Print Then Cut</div>
<div class="a" style="left:1724px;top:1050px;width:470px;height:79px;background:#f4f4f4"></div>
<div class="a" style="left:1740px;top:1062px;width:83px;height:56px;border:2px solid #6e6e6e;border-radius:5px;background:#fff"></div>
<div class="t" style="left:1839px;top:1082px;font-size:16px;color:#222">Blank Canvas</div>
<svg style="left:1760px;top:1136px" width="36" height="34" viewBox="0 0 36 34"><path d="M8 22 A10 10 0 1 1 23 7.5" fill="none" stroke="#b3b3b3" stroke-width="2.4"/><path d="M14 13 H25 V22 L14 26 Z" fill="none" stroke="#b3b3b3" stroke-width="2.4" stroke-linejoin="round"/><path d="M25 11 H31 V30 H14 V22" fill="none" stroke="#b3b3b3" stroke-width="2.4" stroke-linejoin="round"/></svg>
<div class="t" style="left:1760px;top:1179px;font-size:16px;color:#b3b3b3">Slice</div>
<svg style="left:1846px;top:1136px" width="34" height="34" viewBox="0 0 34 34"><rect x="2.5" y="2.5" width="17" height="17" fill="none" stroke="#b3b3b3" stroke-width="2.4"/><circle cx="20" cy="21" r="9.5" fill="none" stroke="#b3b3b3" stroke-width="2.4"/></svg>
<svg style="left:1884px;top:1150px" width="13" height="8" viewBox="0 0 13 8"><path d="M0.5 0.5H12.5L6.5 7.5Z" fill="#b3b3b3"/></svg>
<div class="t" style="left:1837px;top:1179px;font-size:16px;letter-spacing:0.3px;color:#b3b3b3">Combine</div>
<svg style="left:1942px;top:1141px" width="36" height="22" viewBox="0 0 36 22"><path d="M11 6 H27 Q32.5 6 32.5 11 Q32.5 17 27 17 H8 Q2.5 17 2.5 11 Q2.5 3 9 3 H24 Q28 3 28 8 Q28 12.5 24 12.5 H10" fill="none" stroke="#b3b3b3" stroke-width="2.4"/></svg>
<div class="t" style="left:1936px;top:1179px;font-size:16px;letter-spacing:0.4px;color:#b3b3b3">Attach</div>
<svg style="left:2032px;top:1135px" width="34" height="34" viewBox="0 0 34 34"><path d="M17 2 V15 M11.5 10 L17 15.5 L22.5 10" fill="none" stroke="#b3b3b3" stroke-width="2.4"/><path d="M8.5 13 L3 18.5 L17 26.5 L31 18.5 L25.5 13" fill="none" stroke="#b3b3b3" stroke-width="2.4" stroke-linejoin="round"/><path d="M3 23 L17 31.5 L31 23" fill="none" stroke="#b3b3b3" stroke-width="2.4" stroke-linejoin="round"/></svg>
<div class="t" style="left:2024px;top:1179px;font-size:16px;letter-spacing:0.6px;color:#b3b3b3">Flatten</div>
<svg style="left:2124px;top:1135px" width="35" height="35" viewBox="0 0 35 35"><circle cx="17" cy="17.5" r="14.5" fill="none" stroke="#b3b3b3" stroke-width="2.4" stroke-dasharray="6 4.5"/></svg>
<div class="t" style="left:2112px;top:1179px;font-size:16px;letter-spacing:0.5px;color:#b3b3b3">Contour</div>
<div class="a" style="left:1724px;top:1206px;width:470px;height:54px;background:#1fb48a"></div>
<svg style="left:1750px;top:1219px" width="28" height="26" viewBox="0 0 28 26"><g transform="rotate(-40 14 13)"><ellipse cx="14" cy="13" rx="13" ry="8.5" fill="#7a3524"/><path d="M3.5 9 Q2 13 3.5 17 M24.5 9 Q26 13 24.5 17" stroke="#f3e6da" stroke-width="2" fill="none"/><path d="M9 13 H19 M11 11v4M13.5 11v4M16 11v4" stroke="#f3e6da" stroke-width="1.3"/></g></svg>
<div class="t" style="left:1785px;top:1220px;font-size:23px;letter-spacing:0.25px;color:#f4fff9">Get ready for the big game with</div>
<div class="t" style="left:1750px;top:1256px;font-size:23px;letter-spacing:0.25px;color:#f4fff9">these projects</div>
<svg style="left:2166px;top:1241px" width="15" height="13" viewBox="0 0 15 13"><path d="M1.5 0.5 L13.5 12.5 M13.5 0.5 L1.5 12.5" stroke="#f4fff9" stroke-width="2.2"/></svg>

</body></html>
